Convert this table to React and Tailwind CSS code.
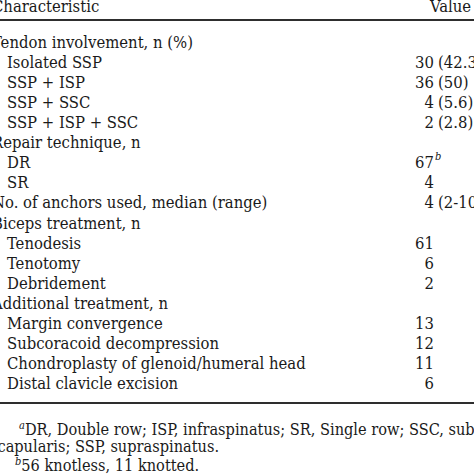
import React from "react";

const rows = [
  { label: "Tendon involvement, n (%)", top: true },
  { label: "Isolated SSP", num: "30", rest: "(42.3)" },
  { label: "SSP + ISP", num: "36", rest: "(50)" },
  { label: "SSP + SSC", num: "4", rest: "(5.6)" },
  { label: "SSP + ISP + SSC", num: "2", rest: "(2.8)" },
  { label: "Repair technique, n", top: true },
  { label: "DR", num: "67", sup: "b" },
  { label: "SR", num: "4" },
  { label: "No. of anchors used, median (range)", top: true, num: "4", rest: "(2-10)" },
  { label: "Biceps treatment, n", top: true },
  { label: "Tenodesis", num: "61" },
  { label: "Tenotomy", num: "6" },
  { label: "Debridement", num: "2" },
  { label: "Additional treatment, n", top: true },
  { label: "Margin convergence", num: "13" },
  { label: "Subcoracoid decompression", num: "12" },
  { label: "Chondroplasty of glenoid/humeral head", num: "11" },
  { label: "Distal clavicle excision", num: "6" },
];

function Row({ row }) {
  return (
    <div className="flex h-[20.1px] items-center whitespace-nowrap">
      <div className={row.top ? "w-[416px] shrink-0" : "w-[401px] pl-[15px] box-content shrink-0"}>
        {row.label}
      </div>
      <div className="w-[26px] shrink-0 text-right">{row.num}</div>
      {row.sup && <sup className="pl-[1px] -mt-[2px] text-[11px] italic">{row.sup}</sup>}
      {row.rest && <div className="pl-[4px]">{row.rest}</div>}
    </div>
  );
}

export default function App() {
  return (
    <div
      className="relative w-[474px] h-[474px] overflow-hidden bg-white text-[#1a1a1a] text-[16.5px]"
      style={{ fontFamily: '"DejaVu Serif Condensed", "DejaVu Serif", serif' }}
    >
      <div className="-ml-[8px] w-[540px]">
        <div className="-mt-[3px] flex h-[20px] items-center whitespace-nowrap">
          <div className="w-[438px] shrink-0">Characteristic</div>
          <div>Value</div>
        </div>
        <div className="mt-[2px] border-b-2 border-[#2e2e2e]" />
        <div className="pt-[12px] pb-[7px]">
          {rows.map((row, i) => (
            <Row key={i} row={row} />
          ))}
        </div>
        <div className="border-b-2 border-[#2e2e2e]" />
        <div className="-ml-[2px] pt-[17px] text-[16.2px] leading-[17.5px] whitespace-nowrap">
          <p className="pl-[29px]">
            <sup className="italic text-[11px]">a</sup>DR, Double row; ISP, infraspinatus; SR, Single row; SSC, subs-
          </p>
          <p>scapularis; SSP, supraspinatus.</p>
          <p className="pl-[25px] mt-[1px]">
            <sup className="italic text-[11px]">b</sup>56 knotless, 11 knotted.
          </p>
        </div>
      </div>
    </div>
  );
}
